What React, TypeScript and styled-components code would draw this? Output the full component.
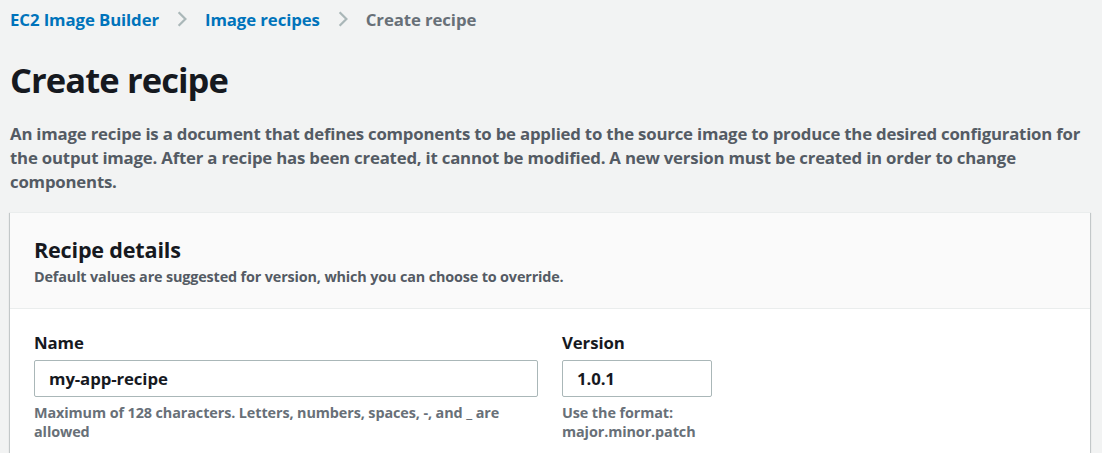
import styled, { createGlobalStyle } from "styled-components";

const GlobalStyle = createGlobalStyle`
  html, body {
    margin: 0;
    padding: 0;
    background: #f2f3f3;
    overflow: hidden;
  }
  body {
    font-family: "Open Sans", "Liberation Sans", sans-serif;
    font-weight: 700;
    color: #16191f;
    -webkit-font-smoothing: antialiased;
  }
  * {
    box-sizing: border-box;
  }
`;

const Page = styled.div`
  display: flex;
  flex-direction: column;
  padding: 0 12px 0 10px;
  width: 1102px;
  min-height: 453px;

  & > * {
    flex-shrink: 0;
  }
`;

const Breadcrumbs = styled.nav`
  display: flex;
  align-items: center;
  gap: 14px;
  height: 38px;
  font-size: 16.8px;
  letter-spacing: -0.1px;
`;

const Crumb = styled.a<{ $current?: boolean }>`
  color: ${(p) => (p.$current ? "#687078" : "#0073bb")};
  text-decoration: none;
`;

const Chevron = styled.svg`
  width: 18px;
  height: 18px;
  fill: none;
  stroke: #aab7b8;
  stroke-width: 2;
`;

const Title = styled.h1`
  margin: 18px 0 0;
  font-size: 34.5px;
  line-height: 48px;
  font-weight: 700;
  letter-spacing: -0.9px;
  color: #16191f;
`;

const Intro = styled.p`
  margin: 18px 0 0;
  font-size: 16.8px;
  line-height: 24px;
  letter-spacing: -0.2px;
  color: #545b64;
`;

const Card = styled.section`
  margin-top: 18px;
  background: #ffffff;
  box-shadow: 0 1px 1px 0 rgba(0, 28, 36, 0.3), 1px 1px 1px 0 rgba(0, 28, 36, 0.15),
    -1px 1px 1px 0 rgba(0, 28, 36, 0.15);
  border-top: 1px solid #eaeded;
`;

const CardHeader = styled.header`
  padding: 22px 24px 22px;
  background: #fafafa;
  border-bottom: 1px solid #eaeded;
`;

const CardTitle = styled.h2`
  margin: 0;
  font-size: 21.6px;
  line-height: 30px;
  font-weight: 700;
  letter-spacing: -0.2px;
  color: #16191f;
`;

const CardDescription = styled.p`
  margin: 2px 0 0;
  font-size: 14.4px;
  line-height: 19px;
  letter-spacing: -0.15px;
  color: #545b64;
`;

const CardBody = styled.div`
  display: flex;
  gap: 24px;
  padding: 22px 24px 24px;
`;

const Field = styled.div<{ $width: number }>`
  display: flex;
  flex-direction: column;
  width: ${(p) => p.$width}px;
`;

const Label = styled.label`
  font-size: 16.8px;
  line-height: 24px;
  letter-spacing: -0.1px;
  color: #16191f;
  margin-bottom: 5px;
`;

const Input = styled.input`
  height: 37px;
  padding: 0 14px;
  border: 1px solid #aab7b8;
  border-radius: 2px;
  background: #ffffff;
  font-family: inherit;
  font-weight: 700;
  font-size: 16.8px;
  letter-spacing: -0.1px;
  color: #16191f;
  outline: none;
`;

const Hint = styled.div`
  margin-top: 6px;
  font-size: 14.4px;
  line-height: 19px;
  letter-spacing: -0.1px;
  color: #687078;
`;

const ChevronIcon = () => (
  <Chevron viewBox="0 0 16 16">
    <path d="M5 2l6 6-6 6" />
  </Chevron>
);

export default function App() {
  return (
    <>
      <GlobalStyle />
      <Page>
        <Breadcrumbs>
          <Crumb href="#">EC2 Image Builder</Crumb>
          <ChevronIcon />
          <Crumb href="#">Image recipes</Crumb>
          <ChevronIcon />
          <Crumb $current>Create recipe</Crumb>
        </Breadcrumbs>
        <Title>Create recipe</Title>
        <Intro>
          An image recipe is a document that defines components to be applied to the source
          image to produce the desired configuration for the output image. After a recipe has
          been created, it cannot be modified. A new version must be created in order to change
          components.
        </Intro>
        <Card>
          <CardHeader>
            <CardTitle>Recipe details</CardTitle>
            <CardDescription>
              Default values are suggested for version, which you can choose to override.
            </CardDescription>
          </CardHeader>
          <CardBody>
            <Field $width={504}>
              <Label>Name</Label>
              <Input defaultValue="my-app-recipe" />
              <Hint>
                Maximum of 128 characters. Letters, numbers, spaces, -, and _ are
                <br />
                allowed
              </Hint>
            </Field>
            <Field $width={150}>
              <Label>Version</Label>
              <Input defaultValue="1.0.1" />
              <Hint>
                Use the format:
                <br />
                major.minor.patch
              </Hint>
            </Field>
          </CardBody>
        </Card>
      </Page>
    </>
  );
}
